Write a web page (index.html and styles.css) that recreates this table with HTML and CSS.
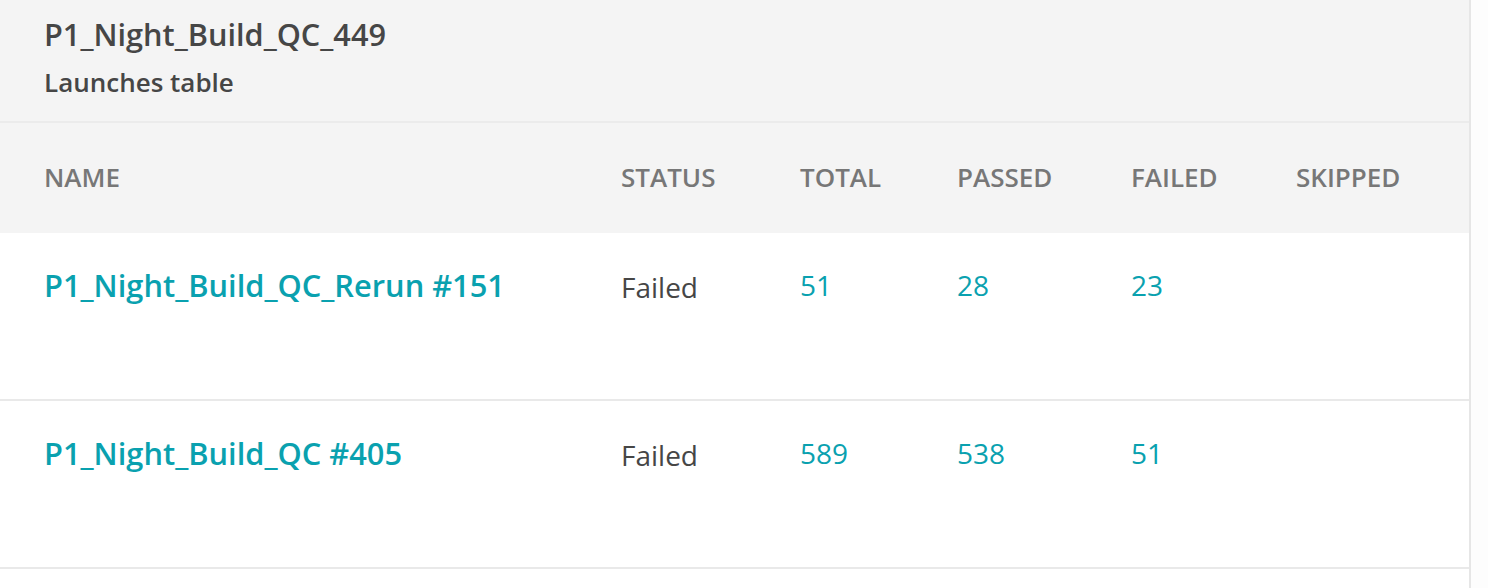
FILE: index.html
```html
<!DOCTYPE html>
<html>
<head>
<meta charset="utf-8">
<link rel="stylesheet" href="styles.css">
</head>
<body>
<div class="page">
  <div class="widget">
    <div class="widget-header">
      <div class="title">P1_Night_Build_QC_449</div>
      <div class="subtitle">Launches table</div>
    </div>
    <div class="table">
      <div class="row head">
        <div class="cell">Name</div>
        <div class="cell">Status</div>
        <div class="cell">Total</div>
        <div class="cell">Passed</div>
        <div class="cell">Failed</div>
        <div class="cell">Skipped</div>
      </div>
      <div class="row body">
        <div class="cell name"><a href="#">P1_Night_Build_QC_Rerun #151</a></div>
        <div class="cell status">Failed</div>
        <div class="cell num"><a href="#">51</a></div>
        <div class="cell num"><a href="#">28</a></div>
        <div class="cell num"><a href="#">23</a></div>
        <div class="cell num"></div>
      </div>
      <div class="row body">
        <div class="cell name"><a href="#">P1_Night_Build_QC #405</a></div>
        <div class="cell status">Failed</div>
        <div class="cell num"><a href="#">589</a></div>
        <div class="cell num"><a href="#">538</a></div>
        <div class="cell num"><a href="#">51</a></div>
        <div class="cell num"></div>
      </div>
    </div>
  </div>
</div>
</body>
</html>
```
FILE: styles.css
```css
html, body {
  margin: 0;
  padding: 0;
  background: #fdfdfd;
}
body {
  font-family: "Open Sans", "Liberation Sans", sans-serif;
  color: #464646;
}
.page {
  display: flex;
  height: 588px;
  overflow: hidden;
}
.widget {
  width: 1469px;
  border-right: 2px solid #e6e6e6;
  background: #ffffff;
  flex: none;
}
.widget-header {
  background: #f4f4f4;
  padding: 14px 0 21px 44px;
  border-bottom: 2px solid #ebebeb;
}
.title {
  font-size: 30.7px;
  font-weight: 600;
  line-height: 40px;
  color: #464646;
}
.subtitle {
  font-size: 26px;
  font-weight: 600;
  line-height: 36px;
  margin-top: 10px;
  color: #464646;
}
.row {
  display: grid;
  grid-template-columns: 577px 179px 157px 174px 165px 1fr;
  padding-left: 44px;
}
.row.head {
  background: #f4f4f4;
  height: 110px;
  box-sizing: border-box;
  padding-top: 36px;
}
.row.head .cell {
  font-size: 26px;
  font-weight: 600;
  line-height: 36px;
  color: #777777;
  text-transform: uppercase;
}
.row.body {
  height: 168px;
  box-sizing: border-box;
  padding-top: 34px;
  border-bottom: 2px solid #e9e9e9;
}
.row.body .cell {
  font-size: 28px;
  line-height: 36px;
}
.cell a {
  color: #0aa1af;
  text-decoration: none;
}
.cell.name a {
  font-weight: 600;
  font-size: 30.8px;
}
.cell.status {
  color: #464646;
  padding-top: 2px;
}
```
